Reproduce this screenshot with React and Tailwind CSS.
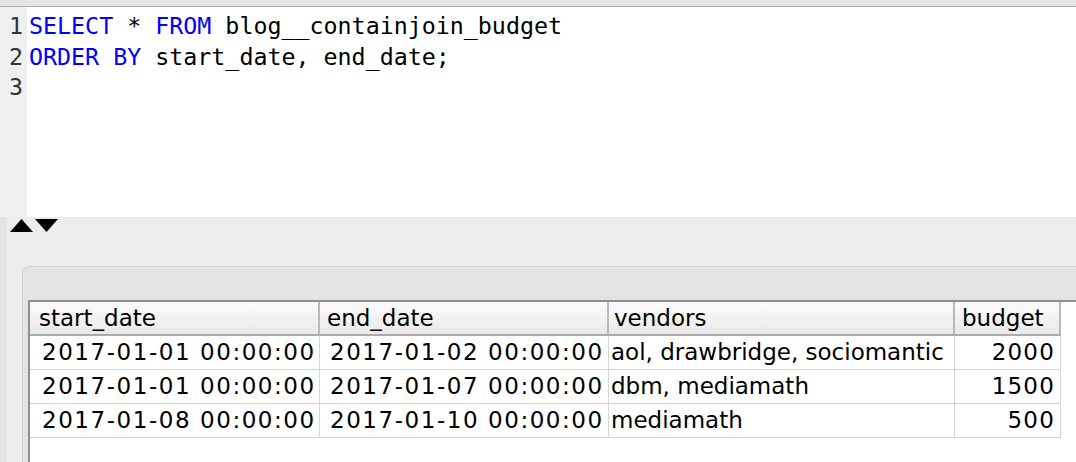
import React from "react";

const rows = [
  ["2017-01-01 00:00:00", "2017-01-02 00:00:00", "aol, drawbridge, sociomantic", "2000"],
  ["2017-01-01 00:00:00", "2017-01-07 00:00:00", "dbm, mediamath", "1500"],
  ["2017-01-08 00:00:00", "2017-01-10 00:00:00", "mediamath", "500"],
];

const mono = { fontFamily: '"DejaVu Sans Mono", "Liberation Mono", monospace' };

export default function App() {
  return (
    <div
      className="w-[1076px] h-[462px] overflow-hidden bg-[#ececec] flex flex-col"
      style={{ fontFamily: '"DejaVu Sans", "Liberation Sans", sans-serif' }}
    >
      <div className="h-[6px] bg-[#e4e4e4] border-b border-[#adadad] box-content shrink-0" />
      <div className="flex h-[210px] shrink-0">
        <div
          className="w-[27px] bg-[#efefef] text-[#333333] text-[23.3px] leading-[30.5px] text-right pr-[4px] pt-[4px]"
          style={mono}
        >
          <div>1</div>
          <div>2</div>
          <div>3</div>
        </div>
        <div
          className="flex-1 bg-white pl-[2px] pt-[4px] text-[23.3px] leading-[30.5px] text-black whitespace-pre"
          style={mono}
        >
          <div>
            <span className="text-[#0000ff]">SELECT</span> * <span className="text-[#0000ff]">FROM</span> blog__containjoin_budget
          </div>
          <div>
            <span className="text-[#0000ff]">ORDER BY</span> start_date, end_date;
          </div>
          <div>&nbsp;</div>
        </div>
      </div>
      <div className="flex flex-1 min-h-0">
        <div className="w-[7px] bg-[#e4e4e4] shrink-0" />
        <div className="flex-1 flex flex-col min-w-0">
          <div className="h-[49px] shrink-0 flex items-start pl-[3px] pt-[2px] gap-[2px]">
            <svg width="23" height="13" viewBox="0 0 23 13">
              <polygon points="0,13 11.5,0 23,13" fill="#000" />
            </svg>
            <svg width="23" height="13" viewBox="0 0 23 13">
              <polygon points="0,0 23,0 11.5,13" fill="#000" />
            </svg>
          </div>
          <div className="flex-1 ml-[15px] rounded-tl-[7px] border-t border-l border-[#d3d3d3] bg-[#e3e3e3] pt-[33px] pl-[5px] flex flex-col min-h-0">
            <div className="flex-1 bg-white border-t-2 border-l-2 border-[#8e8e8e] text-[23px] text-black">
              <div className="flex h-[34px] bg-gradient-to-b from-[#fbfbfb] to-[#e9e9e9] border-b-2 border-[#ababab] box-border w-[1031px]">
                <div className="w-[290px] pl-[9px] flex items-center border-r-2 border-[#b9b9b9]">start_date</div>
                <div className="w-[289px] pl-[7px] flex items-center border-r-2 border-[#b9b9b9]">end_date</div>
                <div className="w-[346px] pl-[5px] flex items-center border-r-2 border-[#b9b9b9]">vendors</div>
                <div className="w-[106px] pl-[7px] flex items-center border-r-2 border-[#b9b9b9]">budget</div>
              </div>
              {rows.map((r, i) => (
                <div key={i} className="flex h-[34px] border-b border-[#d6d6d6] w-[1031px] whitespace-nowrap">
                  <div className="w-[290px] pl-[12px] flex items-center border-r border-[#d6d6d6] tracking-[1.55px]">{r[0]}</div>
                  <div className="w-[289px] pl-[10px] flex items-center border-r border-[#d6d6d6] tracking-[1.55px]">{r[1]}</div>
                  <div className="w-[346px] pl-[2px] flex items-center border-r border-[#d6d6d6]">{r[2]}</div>
                  <div className="w-[106px] pr-[5px] flex items-center justify-end border-r border-[#d6d6d6] tracking-[1.2px]">{r[3]}</div>
                </div>
              ))}
            </div>
          </div>
        </div>
      </div>
    </div>
  );
}
